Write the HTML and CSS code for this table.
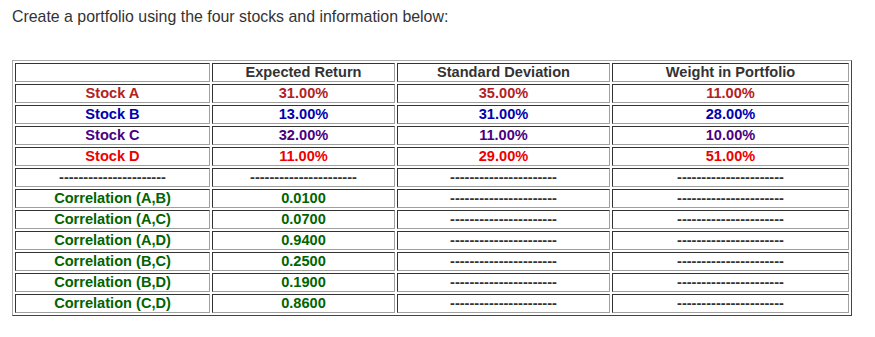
FILE: index.html
```html
<!DOCTYPE html>
<html>
<head>
<meta charset="utf-8">
<link rel="stylesheet" href="styles.css">
</head>
<body>
<p class="intro">Create a portfolio using the four stocks and information below:</p>
<table class="grid">
<colgroup>
<col class="c1"><col class="c2"><col class="c3"><col class="c4">
</colgroup>
<tr class="head"><td></td><td>Expected Return</td><td>Standard Deviation</td><td>Weight in Portfolio</td></tr>
<tr class="sa"><td>Stock A</td><td>31.00%</td><td>35.00%</td><td>11.00%</td></tr>
<tr class="sb"><td>Stock B</td><td>13.00%</td><td>31.00%</td><td>28.00%</td></tr>
<tr class="sc"><td>Stock C</td><td>32.00%</td><td>11.00%</td><td>10.00%</td></tr>
<tr class="sd"><td>Stock D</td><td>11.00%</td><td>29.00%</td><td>51.00%</td></tr>
<tr class="dash"><td>----------------------</td><td>----------------------</td><td>----------------------</td><td>----------------------</td></tr>
<tr class="corr"><td>Correlation (A,B)</td><td>0.0100</td><td class="d">----------------------</td><td class="d">----------------------</td></tr>
<tr class="corr"><td>Correlation (A,C)</td><td>0.0700</td><td class="d">----------------------</td><td class="d">----------------------</td></tr>
<tr class="corr"><td>Correlation (A,D)</td><td>0.9400</td><td class="d">----------------------</td><td class="d">----------------------</td></tr>
<tr class="corr"><td>Correlation (B,C)</td><td>0.2500</td><td class="d">----------------------</td><td class="d">----------------------</td></tr>
<tr class="corr"><td>Correlation (B,D)</td><td>0.1900</td><td class="d">----------------------</td><td class="d">----------------------</td></tr>
<tr class="corr"><td>Correlation (C,D)</td><td>0.8600</td><td class="d">----------------------</td><td class="d">----------------------</td></tr>
</table>
</body>
</html>
```
FILE: styles.css
```css
html, body {
  margin: 0;
  padding: 0;
  background: #fff;
}
body {
  padding: 8px 12px;
  font-family: "Liberation Sans", Arial, sans-serif;
}
.intro {
  margin: 0;
  font-size: 15.9px;
  line-height: 18px;
  color: #333;
}
.grid {
  margin-top: 34px;
  width: 838px;
  table-layout: fixed;
  border-collapse: separate;
  border-spacing: 2px;
  border: 1px solid;
  border-color: #a9a9a9 #444 #444 #a9a9a9;
  font-size: 14.6px;
  font-weight: bold;
}
.c1 { width: 195px; }
.c2 { width: 183px; }
.c3 { width: 213px; }
.c4 { width: 237px; }
.grid td {
  border: 1px solid;
  border-color: #333 #a0a0a0 #a0a0a0 #333;
  height: 17px;
  padding: 0;
  line-height: 17px;
  text-align: center;
  white-space: nowrap;
  overflow: hidden;
}
.head td { color: #333; }
.sa td { color: #b22222; }
.sb td { color: #0000b0; }
.sc td { color: #4b0082; }
.sd td { color: #ee0000; }
.dash td { color: #333; }
.corr td { color: #006400; }
.corr td.d { color: #333; }
```
